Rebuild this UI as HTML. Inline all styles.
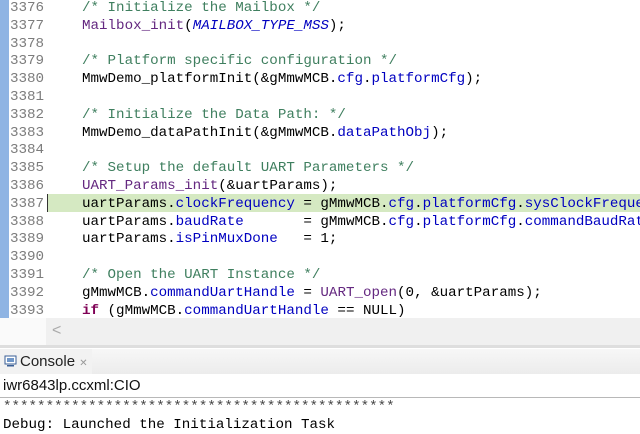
<!DOCTYPE html>
<html><head><meta charset="utf-8"><style>
*{margin:0;padding:0;box-sizing:border-box}
html,body{width:640px;height:434px;overflow:hidden}
body{background:#fff;position:relative;font-family:"Liberation Mono",monospace;}
#ed{position:absolute;left:0;top:0;width:640px;height:318px;overflow:hidden}
.bar{position:absolute;left:0;top:0;width:9px;height:318px;background:#8fb4e3}
.ln{position:absolute;left:10px;width:36px;font-size:14.2px;color:#7c7c7c;line-height:17.8px;height:17.8px}
.cd{position:absolute;left:82px;font-size:14.2px;color:#000;line-height:17.8px;height:17.8px;white-space:pre}
.c{color:#3f7f5f}.f{color:#642880}.b{color:#0000c0}.i{color:#0000c0;font-style:italic}.k{color:#7f0055;font-weight:bold}
.hl{position:absolute;left:47px;top:194px;width:593px;height:18px;background:#d5e9c2}
.caret{position:absolute;left:47px;top:194px;width:1px;height:18px;background:#333}
.sb{position:absolute;left:0;top:318px;width:640px;height:30px;background:#f0f0f0;border-bottom:3px solid #dedede}
.tabs{position:absolute;left:0;top:349px;width:640px;height:25px;background:linear-gradient(#f7f7f7,#ececec)}
.tab{position:absolute;left:0;top:0;width:92px;height:25px;background:#f2f2f2;font-family:"Liberation Sans",sans-serif;font-size:15px;color:#222;padding:4px 0 0 20px}
</style></head><body>
<div id="ed">
<div class="bar"></div>
<div class="hl"></div><div class="caret"></div>
<div style="position:absolute;left:0;top:1px;width:640px;height:317px;overflow:hidden">
<div class="ln" style="top:-1px">3376</div><div class="cd" style="top:-1px"><span class="c">/* Initialize the Mailbox */</span></div>
<div class="ln" style="top:16.8px">3377</div><div class="cd" style="top:16.8px"><span class="f">Mailbox_init</span>(<span class="i">MAILBOX_TYPE_MSS</span>);</div>
<div class="ln" style="top:34.6px">3378</div>
<div class="ln" style="top:52.4px">3379</div><div class="cd" style="top:52.4px"><span class="c">/* Platform specific configuration */</span></div>
<div class="ln" style="top:70.2px">3380</div><div class="cd" style="top:70.2px">MmwDemo_platformInit(&amp;gMmwMCB.<span class="b">cfg</span>.<span class="b">platformCfg</span>);</div>
<div class="ln" style="top:88px">3381</div>
<div class="ln" style="top:105.8px">3382</div><div class="cd" style="top:105.8px"><span class="c">/* Initialize the Data Path: */</span></div>
<div class="ln" style="top:123.6px">3383</div><div class="cd" style="top:123.6px">MmwDemo_dataPathInit(&amp;gMmwMCB.<span class="b">dataPathObj</span>);</div>
<div class="ln" style="top:141.4px">3384</div>
<div class="ln" style="top:159.2px">3385</div><div class="cd" style="top:159.2px"><span class="c">/* Setup the default UART Parameters */</span></div>
<div class="ln" style="top:177px">3386</div><div class="cd" style="top:177px"><span class="f">UART_Params_init</span>(&amp;uartParams);</div>
<div class="ln" style="top:194.8px">3387</div><div class="cd" style="top:194.8px">uartParams.<span class="b">clockFrequency</span> = gMmwMCB.<span class="b">cfg</span>.<span class="b">platformCfg</span>.<span class="b">sysClockFrequency</span>;</div>
<div class="ln" style="top:212.6px">3388</div><div class="cd" style="top:212.6px">uartParams.<span class="b">baudRate</span>       = gMmwMCB.<span class="b">cfg</span>.<span class="b">platformCfg</span>.<span class="b">commandBaudRate</span>;</div>
<div class="ln" style="top:230.4px">3389</div><div class="cd" style="top:230.4px">uartParams.<span class="b">isPinMuxDone</span>   = 1;</div>
<div class="ln" style="top:248.2px">3390</div>
<div class="ln" style="top:266px">3391</div><div class="cd" style="top:266px"><span class="c">/* Open the UART Instance */</span></div>
<div class="ln" style="top:283.8px">3392</div><div class="cd" style="top:283.8px">gMmwMCB.<span class="b">commandUartHandle</span> = <span class="f">UART_open</span>(0, &amp;uartParams);</div>
<div class="ln" style="top:301.6px">3393</div><div class="cd" style="top:301.6px"><span class="k">if</span> (gMmwMCB.<span class="b">commandUartHandle</span> == NULL)</div>
<div class="ln" style="top:319.4px">3394</div><div class="cd" style="top:319.4px">{</div>
</div>
</div>
<div class="sb"><div style="position:absolute;left:0;top:0;width:46px;height:27px;background:#fafafa"></div><span style="position:absolute;left:52px;top:4px;font-family:'Liberation Sans',sans-serif;color:#aaa;font-size:16px">&lt;</span></div>
<div class="tabs"><div class="tab"><svg style="position:absolute;left:4px;top:6px" width="13" height="12" viewBox="0 0 13 12"><rect x="1" y="1" width="11" height="8" fill="#fff" stroke="#3a5f95"/><rect x="3" y="3" width="7" height="4" fill="#6f96c8"/><rect x="3" y="10" width="7" height="1.5" fill="#3a5f95"/></svg>Console <span style="font-size:10px;color:#999">✕</span></div></div>
<div style="position:absolute;left:3px;top:377px;font-family:'Liberation Sans',sans-serif;font-size:15px;color:#111">iwr6843lp.ccxml:CIO</div>
<div style="position:absolute;left:0;top:397px;width:640px;height:1px;background:#b8b8b8"></div>
<div class="cd" style="left:3px;top:399px;color:#444">**********************************************</div>
<div class="cd" style="left:3px;top:417px">Debug: Launched the Initialization Task</div>
</body></html>
